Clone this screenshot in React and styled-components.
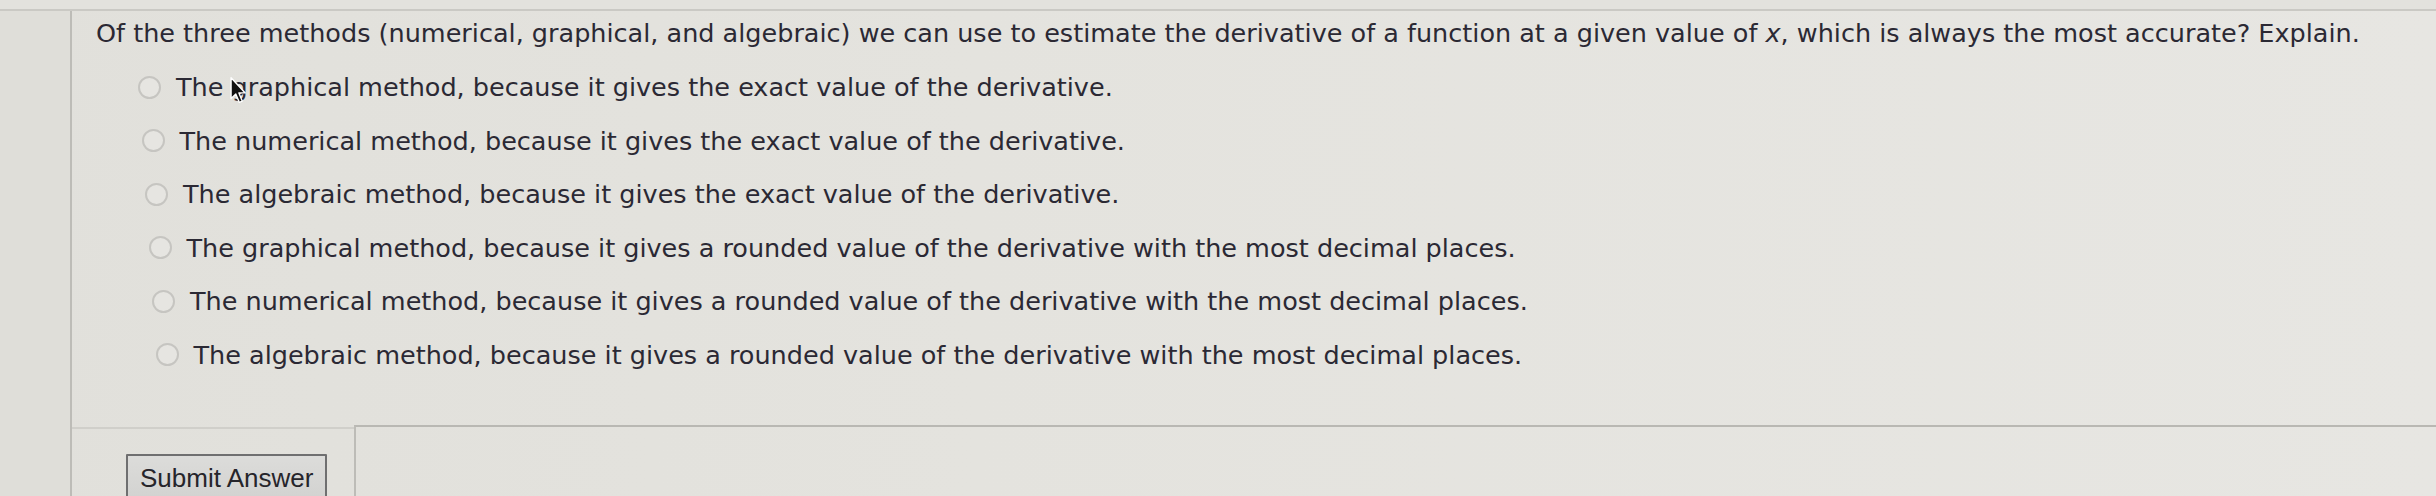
import React from "react";
import styled, { createGlobalStyle } from "styled-components";

const Global = createGlobalStyle`
  html, body { margin: 0; padding: 0; }
  body {
    width: 2436px;
    height: 496px;
    overflow: hidden;
    background: #e3e2dd;
    font-family: "DejaVu Sans", Verdana, sans-serif;
  }
`;

const Page = styled.div`
  margin-top: 9px;
  border-top: 2px solid #cac9c4;
  height: 485px;
  display: flex;
  background: linear-gradient(90deg, #e1e0db 0%, #e4e3de 40%, #e7e6e2 100%);
`;

const Gutter = styled.div`
  width: 70px;
  flex: none;
  background: #dfded9;
`;

const Panel = styled.div`
  flex: 1;
  border-left: 2px solid #bdbcb7;
  display: flex;
  flex-direction: column;
  position: relative;
`;

const Question = styled.p`
  margin: 0;
  padding: 6px 0 0 24px;
  font-size: 25.5px;
  line-height: 32px;
  color: #2b2934;
  white-space: nowrap;
`;

const Options = styled.div`
  margin-top: 22px;
  padding-left: 66px;
  display: flex;
  flex-direction: column;
  gap: 21.5px;
`;

const Option = styled.label`
  display: flex;
  align-items: center;
  gap: 15px;
  height: 32px;
  font-size: 25.5px;
  color: #2b2934;
  white-space: nowrap;
  margin-left: ${(p) => p.$shift}px;
`;

const Radio = styled.span`
  width: 19px;
  height: 19px;
  border-radius: 50%;
  border: 2px solid #c6c5c1;
  background: #e6e5e1;
  flex: none;
`;

const Footer = styled.div`
  margin-top: 56px;
  flex: 1;
  display: flex;
`;

const ButtonCell = styled.div`
  width: 282px;
  flex: none;
  border-top: 2px solid #d0cfca;
  padding: 25px 0 0 54px;
  box-sizing: border-box;
`;

const HelpBox = styled.div`
  flex: 1;
  border-top: 2px solid #b9b8b3;
  border-left: 2px solid #bdbcb7;
  margin-top: -2px;
`;

const SubmitButton = styled.button`
  font-family: "Liberation Sans", Arial, sans-serif;
  font-size: 26px;
  line-height: 30px;
  color: #26252b;
  padding: 7px 10px 8px 12px;
  background: linear-gradient(#dcdcda, #d2d2d0);
  border: 2px solid #6f6f70;
  border-radius: 1px;
  width: 201px;
  text-align: left;
  white-space: nowrap;
`;

const Cursor = styled.svg`
  position: absolute;
  left: 158px;
  top: 66px;
  width: 17px;
  height: 27px;
`;

const options = [
  "The graphical method, because it gives the exact value of the derivative.",
  "The numerical method, because it gives the exact value of the derivative.",
  "The algebraic method, because it gives the exact value of the derivative.",
  "The graphical method, because it gives a rounded value of the derivative with the most decimal places.",
  "The numerical method, because it gives a rounded value of the derivative with the most decimal places.",
  "The algebraic method, because it gives a rounded value of the derivative with the most decimal places.",
];

export default function App() {
  return (
    <>
      <Global />
      <Page>
        <Gutter />
        <Panel>
          <Question>
            Of the three methods (numerical, graphical, and algebraic) we can use to estimate the
            derivative of a function at a given value of <i>x</i>, which is always the most
            accurate? Explain.
          </Question>
          <Options>
            {options.map((t, i) => (
              <Option key={i} $shift={i * 3.5}>
                <Radio />
                <span>{t}</span>
              </Option>
            ))}
          </Options>
          <Footer>
            <ButtonCell>
              <SubmitButton>Submit Answer</SubmitButton>
            </ButtonCell>
            <HelpBox />
          </Footer>
          <Cursor viewBox="0 0 12 20">
            <path
              d="M0.5 0.5 L0.5 16 L4 12.6 L6.6 18.8 L8.8 17.9 L6.3 11.8 L11 11.8 Z"
              fill="#111"
              stroke="#fff"
              strokeWidth="1"
              strokeLinejoin="round"
            />
          </Cursor>
        </Panel>
      </Page>
    </>
  );
}
